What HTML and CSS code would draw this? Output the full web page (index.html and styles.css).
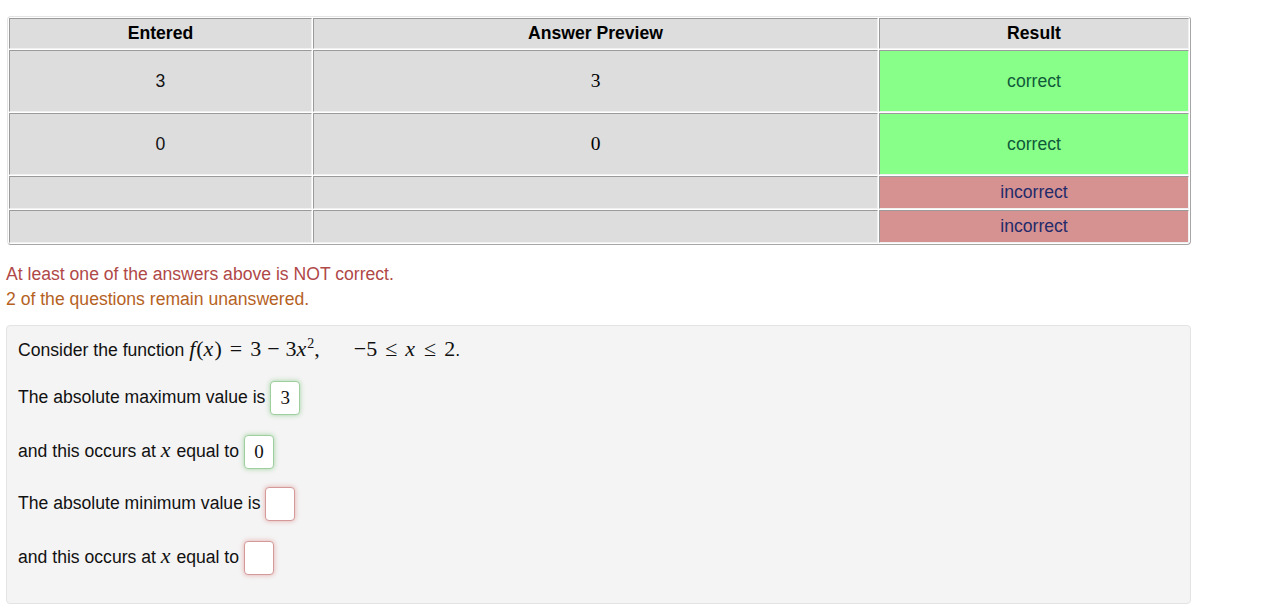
FILE: index.html
```html
<!DOCTYPE html>
<html lang="en">
<head>
    <meta charset="UTF-8">
    <title>Attempt Results</title>
    <link rel="stylesheet" href="styles.css">
</head>
<body>
    <div class="page">
        <!-- Attempt results table -->
        <table class="attempt-results">
            <tr>
                <th class="col-entered">Entered</th>
                <th class="col-preview">Answer Preview</th>
                <th class="col-result">Result</th>
            </tr>
            <tr class="tall">
                <td>3</td>
                <td class="preview">3</td>
                <td class="ok">correct</td>
            </tr>
            <tr class="tall">
                <td>0</td>
                <td class="preview">0</td>
                <td class="ok">correct</td>
            </tr>
            <tr>
                <td></td>
                <td></td>
                <td class="bad">incorrect</td>
            </tr>
            <tr>
                <td></td>
                <td></td>
                <td class="bad">incorrect</td>
            </tr>
        </table>

        <!-- Summary messages -->
        <div class="summary">
            <div class="msg-error">At least one of the answers above is NOT correct.</div>
            <div class="msg-warning">2 of the questions remain unanswered.</div>
        </div>

        <!-- Problem text -->
        <div class="problem">
            <div class="line first">Consider the function <span class="math"><i>f</i>(<i>x</i>)<span class="rel">=</span>3<span class="bin">−</span>3<i>x</i><sup>2</sup>,<span class="quad"></span>−5<span class="rel">≤</span><i>x</i><span class="rel">≤</span>2</span>.</div>
            <div class="line">The absolute maximum value is <input class="answer right" type="text" value="3"></div>
            <div class="line">and this occurs at <span class="math"><i>x</i></span> equal to <input class="answer right" type="text" value="0"></div>
            <div class="line">The absolute minimum value is <input class="answer wrong" type="text" value=""></div>
            <div class="line">and this occurs at <span class="math"><i>x</i></span> equal to <input class="answer wrong" type="text" value=""></div>
        </div>
    </div>
</body>
</html>
```

FILE: styles.css
```css
/* Reset */
* {
    box-sizing: border-box;
}

body {
    margin: 0;
    font-family: "Liberation Sans", Arial, sans-serif;
    font-size: 17.6px;
    color: #111;
    background: #fff;
}

.page {
    padding: 16px 0 0 6px;
    width: 1192px;
}

/* Results table */
.attempt-results {
    margin-left: 1px;
    width: 1184px;
    table-layout: fixed;
    border-collapse: separate;
    border-spacing: 1px;
    border: 1px solid;
    border-color: #e4e4e4 #a6a6a6 #a6a6a6 #e4e4e4;
    border-radius: 4px;
}

.attempt-results th,
.attempt-results td {
    border: 1px solid;
    border-color: #9a9a9a #f0f0f0 #f0f0f0 #9a9a9a;
    background: #dddddd;
    text-align: center;
    padding: 2px 5px;
    line-height: 27px;
    font-weight: normal;
}

.attempt-results th {
    font-weight: bold;
    line-height: 25px;
    color: #000;
}

.col-entered { width: 303px; }
.col-preview { width: 565px; }
.col-result { width: 310px; }

.attempt-results .tall td {
    line-height: 56px;
}

.attempt-results .preview {
    font-family: "Liberation Serif", "Times New Roman", serif;
    font-size: 19.5px;
    color: #000;
}

.attempt-results .ok {
    background: #88ff88;
    color: #0f5a3a;
}

.attempt-results .bad {
    background: #d69191;
    color: #232b6a;
}

/* Messages */
.summary {
    margin-top: 17px;
    line-height: 25px;
}

.msg-error {
    color: #b04848;
}

.msg-warning {
    color: #b5621f;
}

/* Problem well */
.problem {
    margin-top: 13px;
    width: 1185px;
    min-height: 279px;
    background: #f4f4f4;
    border: 1px solid #e3e3e3;
    border-radius: 4px;
    padding: 10px 11px 28px;
    color: #111;
}

.line {
    height: 36px;
    line-height: 36px;
    margin-bottom: 17px;
}

.line.first {
    height: 26px;
    line-height: 26px;
}

.line:last-child {
    margin-bottom: 0;
}

.math {
    font-family: "Liberation Serif", "Times New Roman", serif;
    font-size: 22px;
}

.math i {
    padding-right: 1px;
}

.math sup {
    font-size: 14px;
    vertical-align: 8px;
    line-height: 0;
}

.rel {
    margin: 0 8px;
}

.bin {
    margin: 0 6px;
}

.quad {
    display: inline-block;
    width: 34px;
}

/* Answer inputs */
.answer {
    width: 30px;
    height: 34px;
    vertical-align: middle;
    padding: 0;
    border: 1px solid;
    border-radius: 4px;
    background: #fff;
    text-align: center;
    font-family: "Liberation Serif", "Times New Roman", serif;
    font-size: 19px;
    color: #111;
}

.answer.right {
    border-color: #9fcf9f;
    box-shadow: 0 0 5px rgba(60, 170, 60, 0.45);
}

.answer.wrong {
    border-color: #d49a9a;
    box-shadow: 0 0 5px rgba(210, 60, 60, 0.4);
}
```
